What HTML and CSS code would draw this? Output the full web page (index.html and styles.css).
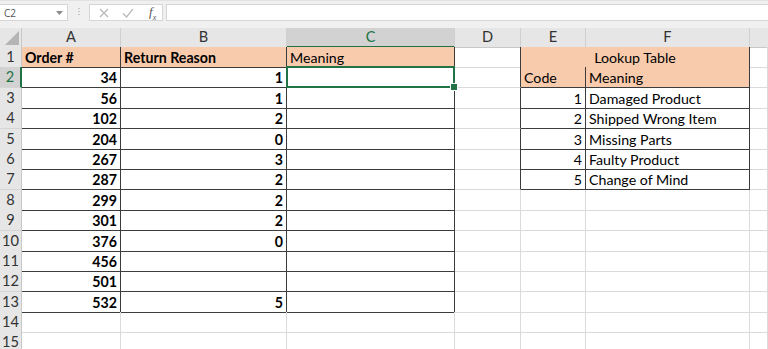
FILE: index.html
```html
<!DOCTYPE html>
<html lang="en">
<head>
    <meta charset="UTF-8">
    <meta name="viewport" content="width=device-width, initial-scale=1.0">
    <title>Return Reasons</title>
    <link rel="stylesheet" href="styles.css">
</head>
<body>
    <div class="toolbar">
        <div class="namebox">
            <span>C2</span>
            <svg class="caret" width="7" height="4" viewBox="0 0 7 4"><path d="M0 0h7L3.5 4z" fill="#8a8a8a"/></svg>
        </div>
        <div class="grip"><i></i><i></i><i></i></div>
        <div class="fxbox">
            <svg width="10" height="10" viewBox="0 0 10 10"><path d="M1 1l8 8M9 1l-8 8" stroke="#b8b8b8" stroke-width="1.2" fill="none"/></svg>
            <svg width="12" height="10" viewBox="0 0 12 10"><path d="M1 5.5l3.5 3.5L11 1" stroke="#b8b8b8" stroke-width="1.2" fill="none"/></svg>
            <span class="fx"><i>f</i><sub>x</sub></span>
        </div>
        <div class="formula"></div>
    </div>

    <div class="sheet">
        <div class="row colhead">
            <div class="corner">
                <svg width="14" height="14" viewBox="0 0 14 14"><path d="M14 0V14H0z" fill="#b5b5b5"/></svg>
            </div>
            <div class="ch">A</div>
            <div class="ch">B</div>
            <div class="ch on">C</div>
            <div class="ch">D</div>
            <div class="ch">E</div>
            <div class="ch">F</div>
            <div class="ch blank"></div>
        </div>

        <div class="row">
            <div class="rh">1</div>
            <div class="c t pk b">Order #</div>
            <div class="c t pk b">Return Reason</div>
            <div class="c t pk">Meaning</div>
            <div class="c dr"></div>
            <div class="c t pk ctr wide">Lookup Table</div>
            <div class="c"></div>
        </div>

        <div class="row">
            <div class="rh on">2</div>
            <div class="c t b r">34</div>
            <div class="c t b r">1</div>
            <div class="c t sel"></div>
            <div class="c dr"></div>
            <div class="c t pk">Code</div>
            <div class="c t pk">Meaning</div>
            <div class="c"></div>
        </div>

        <div class="row">
            <div class="rh">3</div>
            <div class="c t b r">56</div>
            <div class="c t b r">1</div>
            <div class="c t"></div>
            <div class="c dr"></div>
            <div class="c t r">1</div>
            <div class="c t">Damaged Product</div>
            <div class="c"></div>
        </div>

        <div class="row">
            <div class="rh">4</div>
            <div class="c t b r">102</div>
            <div class="c t b r">2</div>
            <div class="c t"></div>
            <div class="c dr"></div>
            <div class="c t r">2</div>
            <div class="c t">Shipped Wrong Item</div>
            <div class="c"></div>
        </div>

        <div class="row">
            <div class="rh">5</div>
            <div class="c t b r">204</div>
            <div class="c t b r">0</div>
            <div class="c t"></div>
            <div class="c dr"></div>
            <div class="c t r">3</div>
            <div class="c t">Missing Parts</div>
            <div class="c"></div>
        </div>

        <div class="row">
            <div class="rh">6</div>
            <div class="c t b r">267</div>
            <div class="c t b r">3</div>
            <div class="c t"></div>
            <div class="c dr"></div>
            <div class="c t r">4</div>
            <div class="c t">Faulty Product</div>
            <div class="c"></div>
        </div>

        <div class="row">
            <div class="rh">7</div>
            <div class="c t b r">287</div>
            <div class="c t b r">2</div>
            <div class="c t"></div>
            <div class="c dr"></div>
            <div class="c t r">5</div>
            <div class="c t">Change of Mind</div>
            <div class="c"></div>
        </div>

        <div class="row">
            <div class="rh">8</div>
            <div class="c t b r">299</div>
            <div class="c t b r">2</div>
            <div class="c t"></div>
            <div class="c"></div>
            <div class="c"></div>
            <div class="c"></div>
            <div class="c"></div>
        </div>

        <div class="row">
            <div class="rh">9</div>
            <div class="c t b r">301</div>
            <div class="c t b r">2</div>
            <div class="c t"></div>
            <div class="c"></div>
            <div class="c"></div>
            <div class="c"></div>
            <div class="c"></div>
        </div>

        <div class="row">
            <div class="rh">10</div>
            <div class="c t b r">376</div>
            <div class="c t b r">0</div>
            <div class="c t"></div>
            <div class="c"></div>
            <div class="c"></div>
            <div class="c"></div>
            <div class="c"></div>
        </div>

        <div class="row">
            <div class="rh">11</div>
            <div class="c t b r">456</div>
            <div class="c t b r"></div>
            <div class="c t"></div>
            <div class="c"></div>
            <div class="c"></div>
            <div class="c"></div>
            <div class="c"></div>
        </div>

        <div class="row">
            <div class="rh">12</div>
            <div class="c t b r">501</div>
            <div class="c t b r"></div>
            <div class="c t"></div>
            <div class="c"></div>
            <div class="c"></div>
            <div class="c"></div>
            <div class="c"></div>
        </div>

        <div class="row">
            <div class="rh">13</div>
            <div class="c t b r">532</div>
            <div class="c t b r">5</div>
            <div class="c t"></div>
            <div class="c"></div>
            <div class="c"></div>
            <div class="c"></div>
            <div class="c"></div>
        </div>

        <div class="row">
            <div class="rh">14</div>
            <div class="c"></div>
            <div class="c"></div>
            <div class="c"></div>
            <div class="c"></div>
            <div class="c"></div>
            <div class="c"></div>
            <div class="c"></div>
        </div>

        <div class="row">
            <div class="rh">15</div>
            <div class="c"></div>
            <div class="c"></div>
            <div class="c"></div>
            <div class="c"></div>
            <div class="c"></div>
            <div class="c"></div>
            <div class="c"></div>
        </div>
    </div>
</body>
</html>
```

FILE: styles.css
```css
* {
    box-sizing: border-box;
}

body {
    margin: 0;
    width: 768px;
    height: 349px;
    overflow: hidden;
    background: #fff;
    font-family: Lato, 'Liberation Sans', sans-serif;
}

/* formula bar */
.toolbar {
    display: flex;
    align-items: flex-start;
    height: 28px;
    padding-top: 3px;
    background: #f0f0f0;
    border-top: 1px solid #e2e2e2;
}

.namebox {
    display: flex;
    align-items: center;
    justify-content: space-between;
    width: 68px;
    height: 17px;
    padding: 0 4px;
    background: #fff;
    border: 1px solid #d6d6d6;
    border-left: none;
    font-family: 'Open Sans', sans-serif;
    font-size: 10px;
    color: #555;
}

.grip {
    display: flex;
    flex-direction: column;
    gap: 2px;
    width: 21px;
    align-items: center;
    padding-top: 4px;
}

.grip i {
    width: 2px;
    height: 1px;
    background: #c4c4c4;
}

.fxbox {
    display: flex;
    align-items: center;
    gap: 13px;
    width: 74px;
    height: 17px;
    padding-left: 9px;
    background: #fff;
    border: 1px solid #d6d6d6;
}

.fx {
    font-family: 'Liberation Serif', serif;
    font-size: 13px;
    color: #555;
    padding-left: 2px;
}

.fx sub {
    font-size: 8px;
    font-style: italic;
}

.formula {
    flex: 1;
    height: 17px;
    margin-left: 3px;
    background: #fff;
    border: 1px solid #d6d6d6;
    border-right: none;
}

/* grid */
.row {
    display: grid;
    grid-template-columns: 22px 99px 166px 168px 66px 65px 164px 1fr;
    height: 20.4px;
    font-size: 14.2px;
}

.colhead {
    height: 19px;
    font-size: 14.6px;
}

.corner {
    display: flex;
    align-items: flex-end;
    justify-content: flex-end;
    padding: 0 2px 2px 0;
    background: #e6e6e6;
    border-right: 1px solid #c8c8c8;
    border-bottom: 1px solid #c8c8c8;
}

.ch {
    background: #e6e6e6;
    border-right: 1px solid #d0d0d0;
    border-bottom: 1px solid #c8c8c8;
    text-align: center;
    line-height: 18px;
    color: #333;
}

.ch.on {
    background: #d2d2d2;
    color: #217346;
    border-bottom: 2px solid #217346;
}

.ch.blank {
    border-right: none;
}

.rh {
    background: #e6e6e6;
    border-right: 1px solid #c8c8c8;
    border-bottom: 1px solid #d4d4d4;
    text-align: center;
    line-height: 20px;
    font-size: 14.6px;
    color: #333;
}

.rh.on {
    background: #d2d2d2;
    color: #217346;
    border-right: 2px solid #217346;
}

.c {
    border-right: 1px solid #dadada;
    border-bottom: 1px solid #dadada;
    padding: 0 3px;
    line-height: 21px;
    white-space: nowrap;
    overflow: hidden;
    color: #000;
}

.t {
    border-right-color: #3c3c3c;
    border-bottom-color: #3c3c3c;
}

.dr {
    border-right-color: #3c3c3c;
}

.pk {
    background: #f8cbad;
}

.b {
    font-weight: bold;
}

.r {
    text-align: right;
}

.ctr {
    text-align: center;
}

.wide {
    grid-column: span 2;
}

/* active cell */
.sel {
    position: relative;
    overflow: visible;
    z-index: 1;
}

.sel::after {
    content: "";
    position: absolute;
    left: -1px;
    top: -1px;
    right: -1px;
    bottom: -1px;
    border: 2px solid #217346;
}

.sel::before {
    content: "";
    position: absolute;
    right: -4px;
    bottom: -4px;
    width: 6px;
    height: 6px;
    background: #217346;
    border: 1px solid #fff;
    z-index: 2;
}
```
